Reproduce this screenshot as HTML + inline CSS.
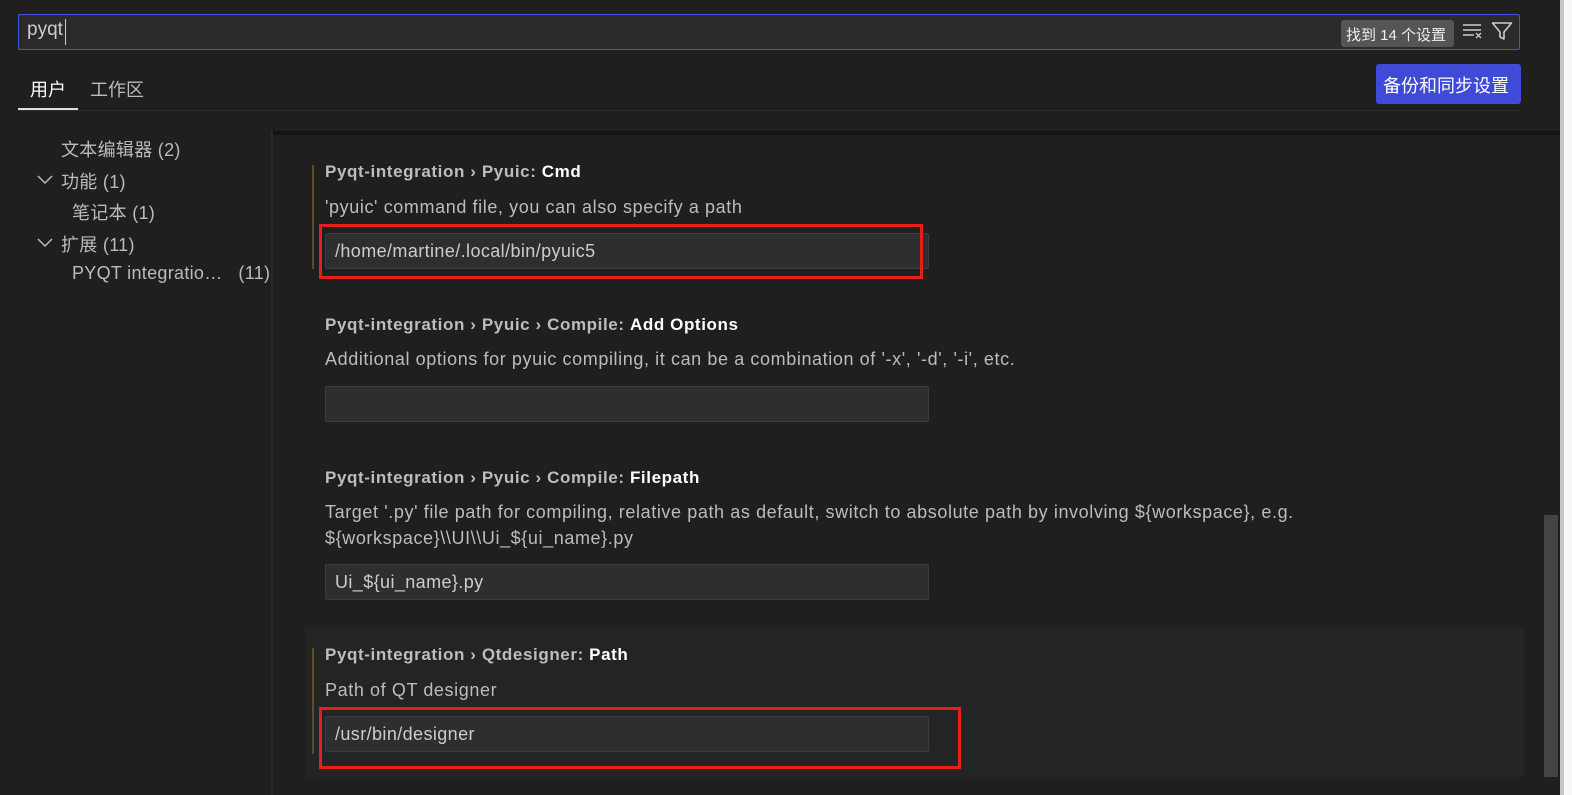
<!DOCTYPE html>
<html><head><meta charset="utf-8"><style>
*{margin:0;padding:0;box-sizing:border-box}
body{width:1572px;height:795px;background:#1f1f1f;position:relative;overflow:hidden;font-family:"Liberation Sans","Noto Sans CJK SC",sans-serif;color:#ccc}
.a{position:absolute}
.search{left:18px;top:14px;width:1502px;height:36px;border:1px solid #4651d8;background:#2b2b2b;border-radius:2px}
.inp{background:#2e2e2e;border:1px solid #3c3c3c;border-radius:2px;width:604px;height:36px;font-size:18px;color:#ccc;padding:7px 9px;letter-spacing:0.4px}
.t{font-size:17px;font-weight:bold;color:#bdbdbd;letter-spacing:0.6px}
.t b{color:#fff}
.d{font-size:18px;color:#bcbcbc;letter-spacing:0.6px}
.red{border:3px solid #e81d1d}
.bar{width:2px;background:#5c4c1e}
.side{font-size:18px;color:#bbb;letter-spacing:0.3px}
</style></head><body>
<div class="a search"></div>
<div class="a" style="left:27px;top:19px;font-size:19px;color:#ccc">pyqt</div>
<div class="a" style="left:65px;top:19px;width:1px;height:26px;background:#ccc"></div>
<div class="a" style="left:1341px;top:20px;width:113px;height:27px;background:#555;border-radius:3px;font-size:15px;color:#eee;padding:4px 5px">找到 14 个设置</div>
<svg class="a" style="left:1462px;top:22px" width="22" height="18" viewBox="0 0 22 18"><path d="M1 3h18M1 8h18M1 13h11" stroke="#ccc" stroke-width="1.6" fill="none"/><path d="M14 11l5 5M19 11l-5 5" stroke="#ccc" stroke-width="1.3"/></svg>
<svg class="a" style="left:1491px;top:21px" width="22" height="20" viewBox="0 0 22 20"><path d="M1.5 2h19l-7.5 9v7l-4-2v-5z" stroke="#ccc" stroke-width="1.6" fill="none" stroke-linejoin="round"/></svg>
<div class="a" style="left:30px;top:76px;font-size:18px;color:#fff">用户</div>
<div class="a" style="left:90px;top:76px;font-size:18px;color:#bbb">工作区</div>
<div class="a" style="left:18px;top:108px;width:60px;height:2px;background:#e0e0e0"></div>
<div class="a" style="left:18px;top:110px;width:1502px;height:1px;background:#2d2d2d"></div>
<div class="a" style="left:1376px;top:64px;width:145px;height:40px;background:#3f4ad6;border-radius:3px;font-size:18px;color:#fff;padding:8px 7px">备份和同步设置</div>
<div class="a" style="left:271px;top:131px;width:1289px;height:4px;background:#141414"></div>
<div class="a" style="left:271px;top:131px;width:2px;height:664px;background:#2a2a2a"></div>
<svg class="a" style="left:37px;top:173px" width="16" height="12"><path d="M1 3l7 7 7-7" stroke="#bbb" stroke-width="1.5" fill="none"/></svg>
<svg class="a" style="left:37px;top:236px" width="16" height="12"><path d="M1 3l7 7 7-7" stroke="#bbb" stroke-width="1.5" fill="none"/></svg>
<div class="a side" style="left:61px;top:136px">文本编辑器 (2)</div>
<div class="a side" style="left:61px;top:168px">功能 (1)</div>
<div class="a side" style="left:72px;top:199px">笔记本 (1)</div>
<div class="a side" style="left:61px;top:231px">扩展 (11)</div>
<div class="a side" style="left:72px;top:263px">PYQT integratio…&nbsp;&nbsp;&nbsp;(11)</div>

<div class="a bar" style="left:312px;top:165px;height:104px"></div>
<div class="a t" style="left:325px;top:162px">Pyqt-integration › Pyuic: <b>Cmd</b></div>
<div class="a d" style="left:325px;top:197px">'pyuic' command file, you can also specify a path</div>
<div class="a inp" style="left:325px;top:233px">/home/martine/.local/bin/pyuic5</div>
<div class="a red" style="left:319px;top:224px;width:604px;height:55px"></div>

<div class="a t" style="left:325px;top:315px">Pyqt-integration › Pyuic › Compile: <b>Add Options</b></div>
<div class="a d" style="left:325px;top:349px">Additional options for pyuic compiling, it can be a combination of '-x', '-d', '-i', etc.</div>
<div class="a inp" style="left:325px;top:386px"></div>

<div class="a t" style="left:325px;top:468px">Pyqt-integration › Pyuic › Compile: <b>Filepath</b></div>
<div class="a d" style="left:325px;top:502px">Target '.py' file path for compiling, relative path as default, switch to absolute path by involving ${workspace}, e.g.</div>
<div class="a d" style="left:325px;top:528px">${workspace}\\UI\\Ui_${ui_name}.py</div>
<div class="a inp" style="left:325px;top:564px">Ui_${ui_name}.py</div>

<div class="a" style="left:305px;top:627px;width:1219px;height:150px;background:#232524"></div>
<div class="a bar" style="left:312px;top:648px;height:106px"></div>
<div class="a t" style="left:325px;top:645px">Pyqt-integration › Qtdesigner: <b>Path</b></div>
<div class="a d" style="left:325px;top:680px">Path of QT designer</div>
<div class="a inp" style="left:325px;top:716px">/usr/bin/designer</div>
<div class="a red" style="left:319px;top:707px;width:642px;height:62px"></div>

<div class="a" style="left:1544px;top:515px;width:14px;height:262px;background:#444"></div>
<div class="a" style="left:1560px;top:0;width:4px;height:795px;background:#c8c8c8"></div>
<div class="a" style="left:1564px;top:0;width:8px;height:795px;background:#f8f8f8"></div>
</body></html>
